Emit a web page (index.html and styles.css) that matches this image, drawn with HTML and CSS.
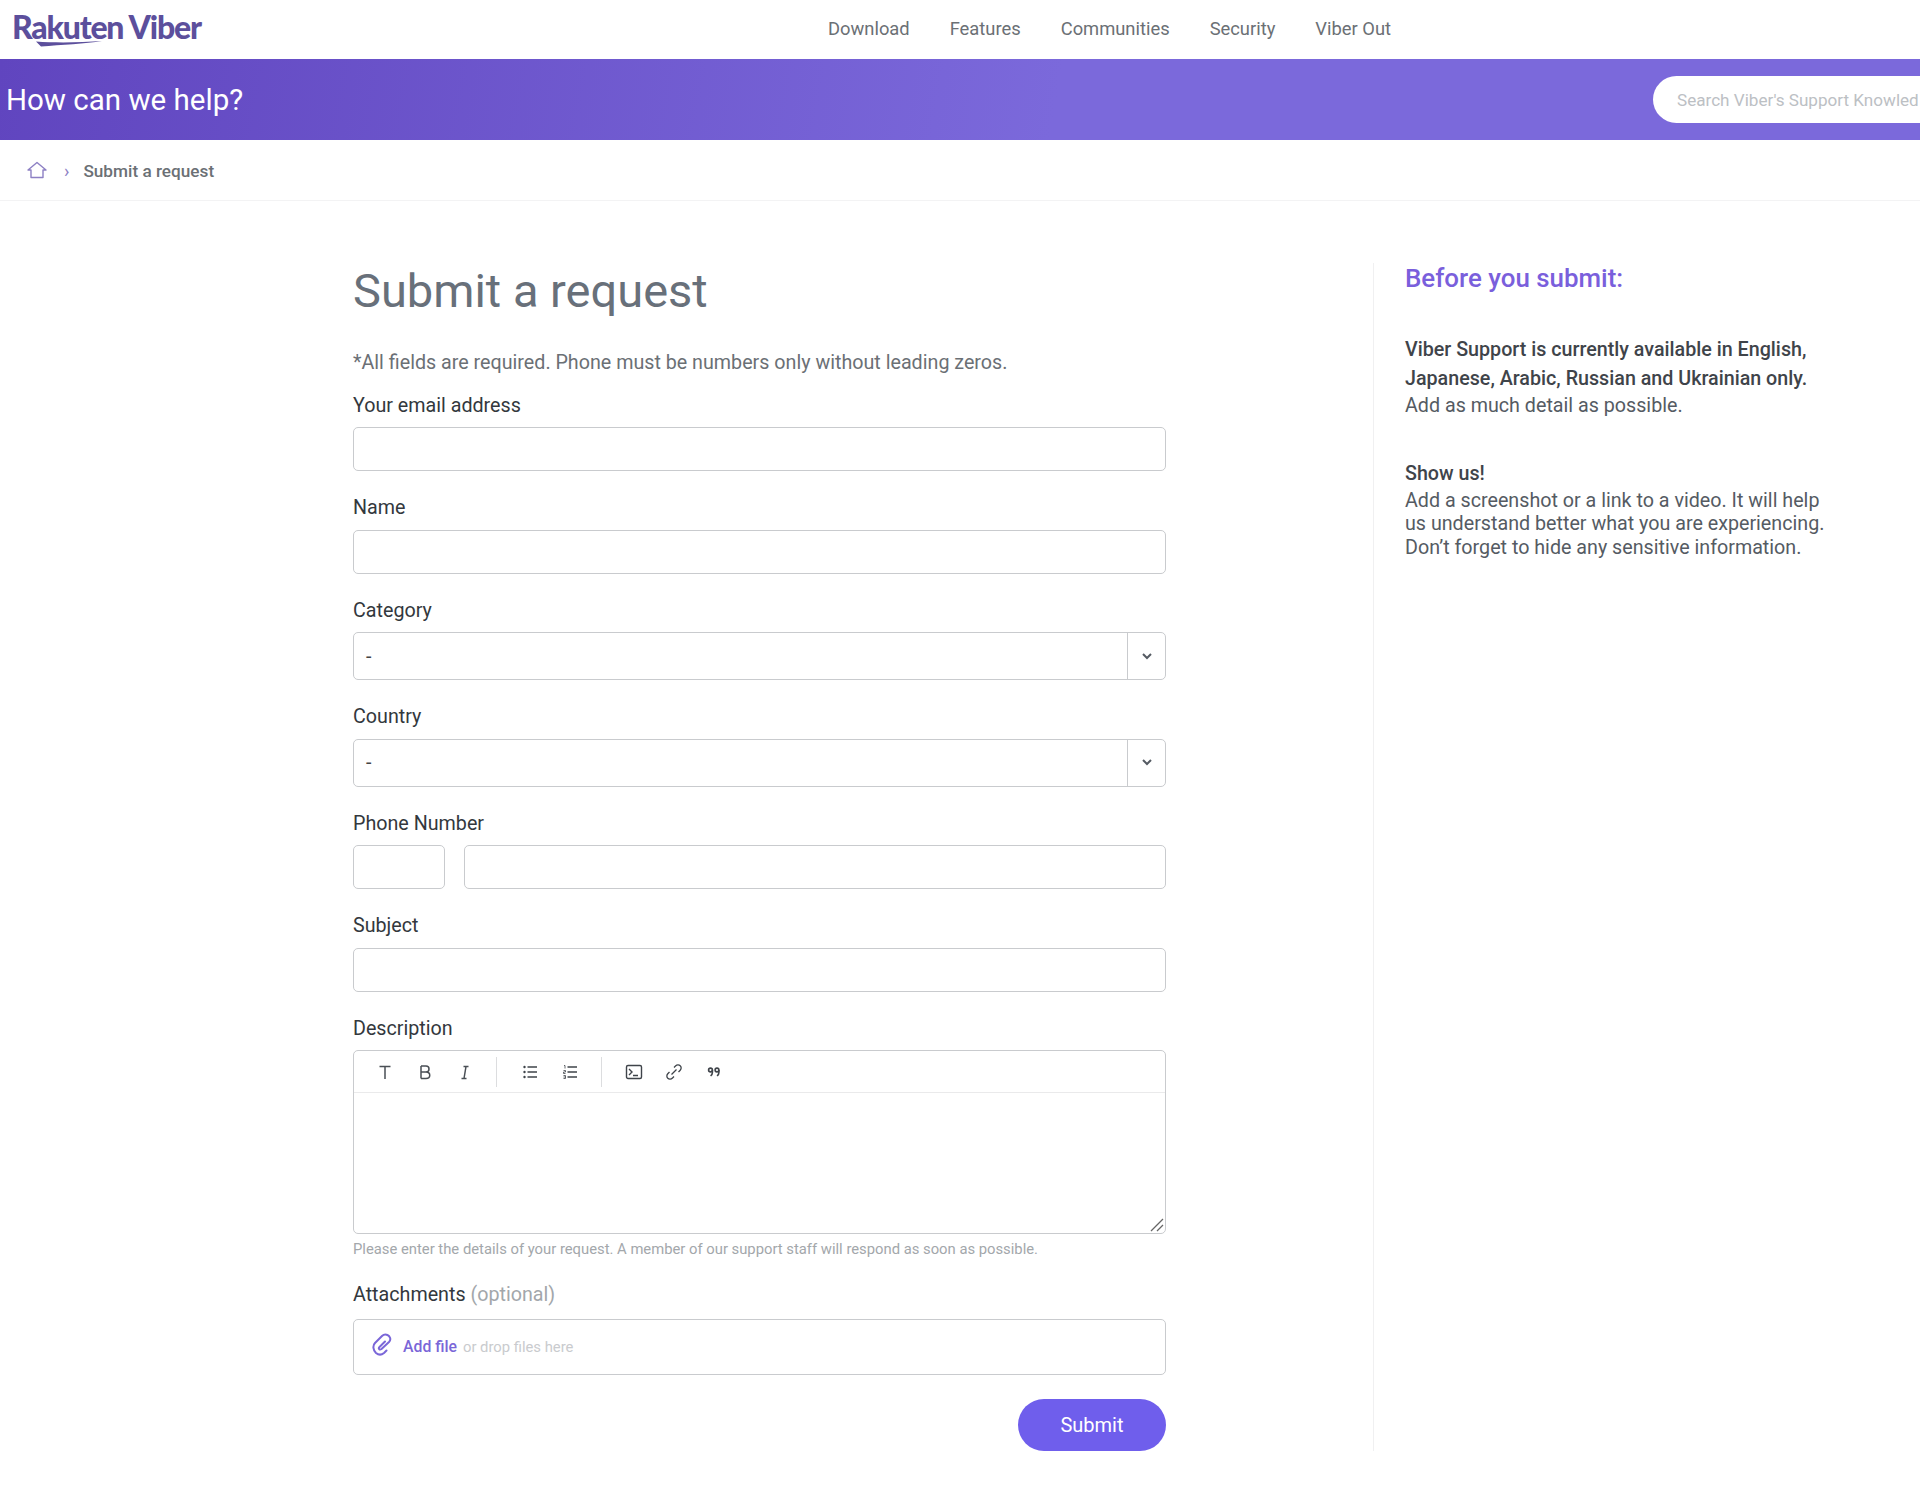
FILE: index.html
```html
<!DOCTYPE html>
<html lang="en">
  <head>
    <meta charset="UTF-8" />
    <title>Submit a request</title>
    <link rel="stylesheet" href="styles.css">
  </head>
  <body>
    <header class="topbar">
      <a class="logo" href="#">
        <span class="logo-text">Rakuten Viber</span>
        <svg class="logo-swoosh" width="70" height="6" viewBox="0 0 70 6"><path d="M0 0.5 C20 2 45 1.5 66 0 C50 2.5 25 4 5 5.5 Z" fill="#5c4f9c"/></svg>
      </a>
      <nav class="nav">
        <a href="#">Download</a>
        <a href="#">Features</a>
        <a href="#">Communities</a>
        <a href="#">Security</a>
        <a href="#">Viber Out</a>
      </nav>
    </header>

    <section class="banner">
      <h2>How can we help?</h2>
      <input class="search" type="text" placeholder="Search Viber's Support Knowledge Base" />
    </section>

    <div class="crumbs">
      <svg width="20" height="18" viewBox="0 0 20 18" fill="none" stroke="#8d80c4" stroke-width="1.4"><path d="M1 9 L10 1.5 L19 9 H16 V16.5 H4 V9 Z" stroke-linejoin="round"/></svg>
      <span class="crumb-sep">›</span>
      <span class="crumb-now">Submit a request</span>
    </div>

    <main class="wrap">
      <div class="left">
        <h1>Submit a request</h1>
        <p class="note">*All fields are required. Phone must be numbers only without leading zeros.</p>

        <form>
          <div class="field first">
            <label>Your email address</label>
            <input type="text" />
          </div>
          <div class="field">
            <label>Name</label>
            <input type="text" />
          </div>
          <div class="field">
            <label>Category</label>
            <div class="select"><span>-</span><b><svg width="10" height="7" viewBox="0 0 10 7" fill="none" stroke="#555b63" stroke-width="2"><path d="M1 1 L5 5 L9 1"/></svg></b></div>
          </div>
          <div class="field">
            <label>Country</label>
            <div class="select"><span>-</span><b><svg width="10" height="7" viewBox="0 0 10 7" fill="none" stroke="#555b63" stroke-width="2"><path d="M1 1 L5 5 L9 1"/></svg></b></div>
          </div>
          <div class="field">
            <label>Phone Number</label>
            <div class="phone">
              <input class="code" type="text" />
              <input type="text" />
            </div>
          </div>
          <div class="field">
            <label>Subject</label>
            <input type="text" />
          </div>
          <div class="field">
            <label>Description</label>
            <div class="editor">
              <div class="toolbar">
                <div class="tools tools-text">
                  <svg width="18" height="18" viewBox="0 0 18 18" fill="none" stroke="#4a4f55" stroke-width="1.5"><path d="M3.5 3.5 H14.5 M9 3.5 V16"/></svg>
                  <svg width="18" height="18" viewBox="0 0 18 18" fill="none" stroke="#4a4f55" stroke-width="1.5"><path d="M5 3 V15.5 M5 3 H10 C14 3 14 9 10 9 H5 M10 9 C15 9 15 15.5 10 15.5 H5"/></svg>
                  <svg width="18" height="18" viewBox="0 0 18 18" fill="none" stroke="#4a4f55" stroke-width="1.5"><path d="M7.5 3.5 H12.5 M5.5 15.5 H10.5 M10 3.5 L8 15.5"/></svg>
                </div>
                <div class="tools tools-list">
                  <svg width="18" height="18" viewBox="0 0 18 18" fill="none" stroke="#3f444a" stroke-width="1.4"><path d="M5.5 4 H15 M5.5 9 H15 M5.5 14 H15"/><circle cx="2.5" cy="4" r="1.2" fill="#3f444a" stroke="none"/><circle cx="2.5" cy="9" r="1.2" fill="#3f444a" stroke="none"/><circle cx="2.5" cy="14" r="1.2" fill="#3f444a" stroke="none"/></svg>
                  <svg width="18" height="18" viewBox="0 0 18 18" fill="none" stroke="#3f444a" stroke-width="1.4"><path d="M5.5 4 H15 M5.5 9 H15 M5.5 14 H15"/><path stroke-width="0.8" d="M2 2.5 H3 V5.5 M1.5 7.5 H3.5 V9 H1.5 V10.5 H3.5 M1.5 12.5 H3.5 V15.5 H1.5 M1.5 14 H3.5"/></svg>
                </div>
                <div class="tools tools-misc">
                  <svg width="18" height="18" viewBox="0 0 18 18" fill="none" stroke="#3f444a" stroke-width="1.4"><rect x="1.5" y="2.5" width="15" height="13" rx="1.5"/><path d="M4 6 L7 9 L4 12 M8 12.5 H13"/></svg>
                  <svg width="18" height="18" viewBox="0 0 18 18" fill="none" stroke="#3f444a" stroke-width="1.3"><path d="M6.5 11.5 L11.5 6.5 M9 4.5 L10.5 3 C12 1.5 14 1.5 15.2 2.8 C16.5 4 16.5 6 15 7.5 L13.5 9 M9 13.5 L7.5 15 C6 16.5 4 16.5 2.8 15.2 C1.5 14 1.5 12 3 10.5 L4.5 9"/></svg>
                  <svg width="18" height="18" viewBox="0 0 18 18" fill="none" stroke="#3f444a" stroke-width="1.6"><circle cx="5.5" cy="7" r="1.9"/><path d="M7.4 7 V9.5 C7.4 11 6.8 12 5.6 13"/><circle cx="12" cy="7" r="1.9"/><path d="M13.9 7 V9.5 C13.9 11 13.3 12 12.1 13"/></svg>
                </div>
              </div>
              <div class="editor-body">
                <svg class="grip" width="14" height="14" viewBox="0 0 14 14" stroke="#666" stroke-width="1.3"><path d="M1 13 L13 1 M7 13 L13 7"/></svg>
              </div>
            </div>
            <p class="hint">Please enter the details of your request. A member of our support staff will respond as soon as possible.</p>
          </div>
          <div class="field attach-field">
            <label>Attachments <span class="opt">(optional)</span></label>
            <div class="attach">
              <svg class="clip" width="20" height="24" viewBox="0 0 20 24" fill="none" stroke="#7a66d8" stroke-width="2" stroke-linecap="round" stroke-linejoin="round"><path d="M13 8.5 L7.5 14 C6 15.5 7.5 17.5 9.5 16 L17 9 C19.5 6.5 18 3 15.5 2 C13.5 1 11.5 1.5 10 3 L3 10 C0.5 12.5 1 17 4 20 C6.5 22 9.5 22 12 20 L14.5 17.5"/></svg>
              <a href="#">Add file</a>
              <span>or drop files here</span>
            </div>
          </div>
          <div class="actions">
            <button type="button">Submit</button>
          </div>
        </form>
      </div>

      <aside class="side">
        <h3>Before you submit:</h3>
        <div class="side-lead">
          <strong>Viber Support is currently available in English, Japanese, Arabic, Russian and Ukrainian only.</strong>
          <p>Add as much detail as possible.</p>
        </div>
        <div class="side-show">
          <strong>Show us!</strong>
          <p>Add a screenshot or a link to a video. It will help us understand better what you are experiencing. Don’t forget to hide any sensitive information.</p>
        </div>
      </aside>
    </main>
  </body>
</html>
```

FILE: styles.css
```css
*{
    box-sizing: border-box;
}
html,body{
    margin: 0;
    overflow-x: hidden;
}
body{
    font-family: Roboto, "Liberation Sans", sans-serif;
    color: #2f3338;
    background: #fff;
}
a{
    text-decoration: none;
}
.topbar{
    height: 59px;
    display: flex;
    align-items: center;
    padding-left: 12px;
}
.logo{
    position: relative;
    display: block;
    width: 816px;
    flex: none;
    height: 44px;
    margin-top: -4px;
}
.logo-text{
    font-family: Lato, Inter, sans-serif;
    font-weight: 900;
    font-size: 32px;
    letter-spacing: -1.2px;
    color: #5c4f9c;
    line-height: 42px;
}
.logo-swoosh{
    position: absolute;
    left: 24px;
    top: 35px;
}
.nav{
    display: flex;
    gap: 40px;
    margin-top: -3px;
}
.nav a{
    color: #6b7075;
    font-size: 18.35px;
}
.banner{
    height: 81px;
    background: linear-gradient(100deg, #6045bf 0%, #7b69db 55%, #7b69db 100%);
    display: flex;
    justify-content: space-between;
    align-items: center;
    padding-left: 6px;
}
.banner h2{
    margin: 0;
    color: #fff;
    font-weight: 400;
    font-size: 29.5px;
}
.search{
    width: 267px;
    height: 47px;
    flex: none;
    border: none;
    border-radius: 24px 0 0 24px;
    padding-left: 24px;
    font-family: inherit;
    font-size: 17.1px;
    outline: none;
}
.search::placeholder{
    color: #bcc0c4;
}
.crumbs{
    height: 61px;
    border-bottom: 1px solid #f3f3f4;
    display: flex;
    align-items: center;
    padding-left: 27px;
}
.crumb-sep{
    color: #8d80c4;
    font-size: 18px;
    margin: 0 14px 0 17px;
}
.crumb-now{
    color: #6b7075;
    font-size: 17.2px;
    font-weight: 500;
    margin-top: 1px;
}
.wrap{
    display: flex;
    padding: 62px 0 0 353px;
}
.left{
    width: 813px;
    flex: none;
}
.left h1{
    margin: 0;
    font-weight: 400;
    font-size: 47px;
    line-height: 56px;
    color: #68707a;
}
.note{
    margin: 31.5px 0 0;
    font-size: 19.7px;
    line-height: 24px;
    color: #6b7075;
}
.field{
    margin-top: 25px;
}
.field.first{
    margin-top: 19px;
}
.field label{
    display: block;
    font-size: 19.7px;
    line-height: 24px;
    margin-bottom: 9.5px;
    color: #33383d;
}
.field input{
    display: block;
    width: 100%;
    height: 44px;
    border: 1px solid #c9cbce;
    border-radius: 5px;
    outline: none;
}
.select{
    height: 48px;
    border: 1px solid #c9cbce;
    border-radius: 5px;
    display: flex;
    justify-content: space-between;
    align-items: center;
    padding-left: 12px;
    font-size: 19.7px;
    color: #444;
}
.select b{
    width: 38px;
    height: 100%;
    border-left: 1px solid #c9cbce;
    display: flex;
    justify-content: center;
    align-items: center;
}
.phone{
    display: flex;
    gap: 19px;
}
.field .code{
    width: 92px;
    flex: none;
}
.editor{
    height: 184px;
    border: 1px solid #c9cbce;
    border-radius: 5px;
    display: flex;
    flex-direction: column;
}
.toolbar{
    height: 42px;
    flex: none;
    border-bottom: 1px solid #eaeaeb;
    display: flex;
    align-items: center;
    padding-left: 22px;
}
.tools{
    display: flex;
    gap: 22px;
    height: 30px;
    align-items: center;
}
.tools-text{
    padding-right: 22px;
    border-right: 1px solid #dcdddf;
}
.tools-list{
    padding: 0 21px 0 25px;
    border-right: 1px solid #dcdddf;
}
.tools-misc{
    padding-left: 23px;
}
.editor-body{
    flex: 1;
    position: relative;
}
.grip{
    position: absolute;
    right: 1px;
    bottom: 1px;
}
.hint{
    margin: 6px 0 0;
    font-size: 14.8px;
    line-height: 18px;
    color: #a3a7ab;
}
.attach-field{
    margin-top: 25px;
}
.attach-field label{
    margin-bottom: 11.5px;
}
.opt{
    color: #a3a7ab;
}
.attach{
    height: 56px;
    border: 1px solid #c9cbce;
    border-radius: 5px;
    display: flex;
    align-items: center;
    padding-left: 18px;
    font-size: 14.8px;
    color: #c9cbce;
}
.clip{
    margin-top: -4px;
}
.attach a{
    color: #7a66d8;
    font-size: 15.8px;
    font-weight: 500;
    margin: 0 6px 0 11px;
}
.actions{
    display: flex;
    justify-content: flex-end;
    margin-top: 24px;
}
.actions button{
    width: 148px;
    height: 52px;
    border: none;
    border-radius: 26px;
    background: #6f5eec;
    color: #fff;
    font-family: inherit;
    font-size: 20px;
}
.side{
    margin-left: 207px;
    padding: 0 5px 0 31px;
    width: 460px;
    border-left: 1px solid #f0f0f1;
    flex: none;
    height: 1188px;
}
.side h3{
    margin: 0;
    font-size: 25.9px;
    font-weight: 500;
    line-height: 30px;
    color: #7a5fdc;
}
.side p{
    margin: 0;
    font-size: 19.7px;
    line-height: 23.5px;
    color: #555b63;
}
.side strong{
    display: block;
    font-size: 19.7px;
    font-weight: 500;
    color: #3f444a;
}
.side-lead{
    margin-top: 42px;
}
.side-lead strong{
    line-height: 29px;
}
.side-lead p{
    margin-top: 1px;
}
.side-show{
    margin-top: 44px;
}
.side-show strong{
    line-height: 24px;
    margin-bottom: 3px;
}
```
